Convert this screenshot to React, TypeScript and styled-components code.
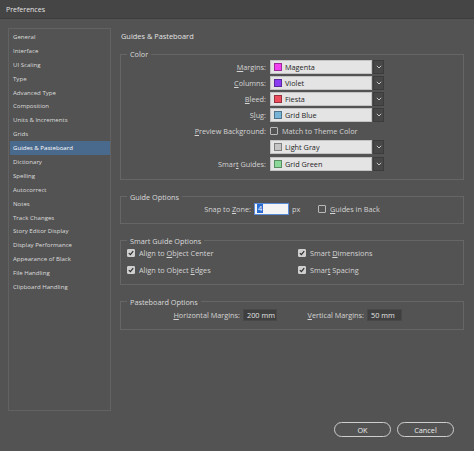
import styled, { createGlobalStyle } from "styled-components";

const GlobalStyle = createGlobalStyle`
  html, body {
    margin: 0;
    padding: 0;
    background: #535353;
  }
  body {
    font-family: "Open Sans", "Noto Sans", sans-serif;
  }
  * {
    box-sizing: border-box;
  }
`;

const sections = [
  "General",
  "Interface",
  "UI Scaling",
  "Type",
  "Advanced Type",
  "Composition",
  "Units & Increments",
  "Grids",
  "Guides & Pasteboard",
  "Dictionary",
  "Spelling",
  "Autocorrect",
  "Notes",
  "Track Changes",
  "Story Editor Display",
  "Display Performance",
  "Appearance of Black",
  "File Handling",
  "Clipboard Handling",
];

const Chevron = () => (
  <svg width="6" height="4" viewBox="0 0 6 4">
    <path d="M0.8 0.8 L3 3 L5.2 0.8" fill="none" stroke="#c4c4c4" strokeWidth="1" />
  </svg>
);

const Check = () => (
  <svg width="6" height="6" viewBox="0 0 6 6">
    <path d="M0.8 3.1 L2.4 4.6 L5.2 1.2" fill="none" stroke="#2e2e2e" strokeWidth="1.2" />
  </svg>
);

const Box = ({ checked }: { checked?: boolean }) => (
  <CheckBox $checked={!!checked}>{checked && <Check />}</CheckBox>
);

const Dropdown = ({ color, name }: { color: string; name: string }) => (
  <>
    <Select>
      <Swatch $color={color} />
      {name}
    </Select>
    <ChevronButton>
      <Chevron />
    </ChevronButton>
  </>
);

const App = () => {
  return (
    <Window>
      <GlobalStyle />
      <TitleBar>Preferences</TitleBar>
      <Body>
        <Sidebar>
          {sections.map((s) => (
            <SideItem key={s} $active={s === "Guides & Pasteboard"}>
              {s}
            </SideItem>
          ))}
        </Sidebar>
        <Main>
          <Header>Guides &amp; Pasteboard</Header>

          <Group $first>
            <Legend>Color</Legend>
            <ColorRows>
              <ColorRow>
                <RowLabel>
                  <Key>M</Key>argins:
                </RowLabel>
                <Dropdown color="#f040f0" name="Magenta" />
              </ColorRow>
              <ColorRow>
                <RowLabel>
                  <Key>C</Key>olumns:
                </RowLabel>
                <Dropdown color="#8a3cf0" name="Violet" />
              </ColorRow>
              <ColorRow>
                <RowLabel>
                  <Key>B</Key>leed:
                </RowLabel>
                <Dropdown color="#ec4c5c" name="Fiesta" />
              </ColorRow>
              <ColorRow>
                <RowLabel>
                  S<Key>l</Key>ug:
                </RowLabel>
                <Dropdown color="#78b4d6" name="Grid Blue" />
              </ColorRow>
              <ColorRow>
                <RowLabel>
                  <Key>P</Key>review Background:
                </RowLabel>
                <InlineCheck>
                  <Box />
                  Match to Theme Color
                </InlineCheck>
              </ColorRow>
              <ColorRow>
                <RowLabel />
                <Dropdown color="#c4c4c4" name="Light Gray" />
              </ColorRow>
              <ColorRow>
                <RowLabel>
                  Smar<Key>t</Key> Guides:
                </RowLabel>
                <Dropdown color="#8cd898" name="Grid Green" />
              </ColorRow>
            </ColorRows>
          </Group>

          <Group>
            <Legend>Guide Options</Legend>
            <FieldRow>
              <FieldLabel $width={124}>
                Snap to <Key>Z</Key>one:
              </FieldLabel>
              <ZoneInput>
                <Selected>4</Selected>
              </ZoneInput>
              <Unit>px</Unit>
              <InlineCheck>
                <Box />
                <span>
                  <Key>G</Key>uides in Back
                </span>
              </InlineCheck>
            </FieldRow>
          </Group>

          <Group>
            <Legend>Smart Guide Options</Legend>
            <CheckGrid>
              <InlineCheck>
                <Box checked />
                <span>
                  Align to <Key>O</Key>bject Center
                </span>
              </InlineCheck>
              <InlineCheck>
                <Box checked />
                <span>
                  Smart <Key>D</Key>imensions
                </span>
              </InlineCheck>
              <InlineCheck>
                <Box checked />
                <span>
                  Align to Object <Key>E</Key>dges
                </span>
              </InlineCheck>
              <InlineCheck>
                <Box checked />
                <span>
                  Smar<Key>t</Key> Spacing
                </span>
              </InlineCheck>
            </CheckGrid>
          </Group>

          <Group $pad={2}>
            <Legend>Pasteboard Options</Legend>
            <FieldRow>
              <FieldLabel $width={113}>
                <Key>H</Key>orizontal Margins:
              </FieldLabel>
              <DarkInput $width={34}>200 mm</DarkInput>
              <FieldLabel $width={87}>
                <Key>V</Key>ertical Margins:
              </FieldLabel>
              <DarkInput $width={35}>50 mm</DarkInput>
            </FieldRow>
          </Group>
        </Main>
      </Body>
      <Footer>
        <PillButton>OK</PillButton>
        <PillButton>Cancel</PillButton>
      </Footer>
    </Window>
  );
};

export default App;

const Window = styled.div`
  width: 474px;
  height: 451px;
  display: flex;
  flex-direction: column;
  background: #535353;
  overflow: hidden;
`;

const TitleBar = styled.div`
  height: 19px;
  display: flex;
  align-items: center;
  padding-left: 6px;
  background: #454545;
  border-bottom: 1px solid #3d3d3d;
  color: #e4e4e4;
  font-size: 7px;
`;

const Body = styled.div`
  display: flex;
  gap: 9px;
  padding: 9px 0 0 8px;
`;

const Sidebar = styled.div`
  width: 103px;
  height: 383px;
  border: 1px solid #626262;
  padding-top: 1px;
  display: flex;
  flex-direction: column;
`;

const SideItem = styled.div<{ $active?: boolean }>`
  height: 13.9px;
  line-height: 13.9px;
  margin-left: 1px;
  padding-left: 3px;
  font-size: 6.1px;
  white-space: nowrap;
  color: ${(p) => (p.$active ? "#ffffff" : "#dcdcdc")};
  background: ${(p) => (p.$active ? "#4a6a8d" : "transparent")};
`;

const Main = styled.div`
  width: 344px;
  display: flex;
  flex-direction: column;
  color: #d4d4d4;
  font-size: 7.3px;
`;

const Header = styled.div`
  height: 16px;
  line-height: 16px;
  padding-left: 1px;
  color: #e2e2e2;
  font-size: 7.4px;
`;

const Group = styled.fieldset<{ $first?: boolean; $pad?: number }>`
  margin: ${(p) => (p.$first ? "5px" : "12px")} 0 0 0;
  padding: ${(p) => p.$pad ?? 1}px 6px 8px 6px;
  border: 1px solid #666666;
  min-width: 0;
`;

const Legend = styled.legend`
  padding: 0 3px;
  line-height: 10px;
  font-size: 7.3px;
  color: #dadada;
`;

const ColorRows = styled.div`
  display: flex;
  flex-direction: column;
  gap: 2.2px;
  margin-top: -0.5px;
  padding-bottom: 0;
`;

const ColorRow = styled.div`
  display: flex;
  align-items: center;
  height: 14px;
`;

const RowLabel = styled.span`
  width: 139px;
  text-align: right;
  white-space: nowrap;
`;

const Key = styled.span`
  text-decoration: underline;
  text-underline-offset: 1px;
`;

const Select = styled.div`
  margin-left: 4px;
  width: 102px;
  height: 14px;
  display: flex;
  align-items: center;
  gap: 3px;
  padding-left: 3px;
  background: #e4e4e4;
  border: 1px solid #c2c2c2;
  color: #1e1e1e;
`;

const Swatch = styled.span<{ $color: string }>`
  width: 8px;
  height: 8px;
  background: ${(p) => p.$color};
  border: 1px solid rgba(0, 0, 0, 0.35);
  flex-shrink: 0;
`;

const ChevronButton = styled.div`
  margin-left: 1px;
  width: 11px;
  height: 14px;
  display: flex;
  align-items: center;
  justify-content: center;
  background: #474747;
  border: 1px solid #3c3c3c;
`;

const InlineCheck = styled.span`
  display: inline-flex;
  align-items: center;
  gap: 4px;
  margin-left: 4px;
  white-space: nowrap;
  color: #d4d4d4;
`;

const CheckBox = styled.span<{ $checked: boolean }>`
  width: 8px;
  height: 8px;
  display: inline-flex;
  align-items: center;
  justify-content: center;
  flex-shrink: 0;
  border-radius: 1px;
  border: 1px solid ${(p) => (p.$checked ? "#cfcfcf" : "#b9b9b9")};
  background: ${(p) => (p.$checked ? "#cfcfcf" : "transparent")};
`;

const FieldRow = styled.div`
  display: flex;
  align-items: center;
  height: 12px;
`;

const FieldLabel = styled.span<{ $width: number }>`
  width: ${(p) => p.$width}px;
  text-align: right;
  white-space: nowrap;
`;

const ZoneInput = styled.div`
  margin-left: 3px;
  width: 35px;
  height: 12px;
  display: flex;
  align-items: center;
  padding-left: 2px;
  background: #f4f4f4;
  border: 1px solid #5a8bd8;
`;

const Selected = styled.span`
  background: #2a6bd2;
  color: #ffffff;
  line-height: 9px;
  padding: 0 1px;
`;

const Unit = styled.span`
  width: 22px;
  margin-left: 3px;
`;

const CheckGrid = styled.div`
  display: grid;
  grid-template-columns: 171px auto;
  grid-auto-rows: 12px;
  row-gap: 5px;
  align-items: center;

  & > ${InlineCheck} {
    margin-left: 0;
  }
`;

const DarkInput = styled.div<{ $width: number }>`
  margin-left: 3px;
  width: ${(p) => p.$width}px;
  height: 12px;
  display: flex;
  align-items: center;
  padding-left: 3px;
  background: #3f3f3f;
  border: 1px solid #484848;
  color: #e4e4e4;
  white-space: nowrap;
`;

const Footer = styled.div`
  display: flex;
  justify-content: flex-end;
  gap: 6px;
  margin-top: 11px;
  padding-right: 20px;
`;

const PillButton = styled.button`
  width: 57px;
  height: 15px;
  padding: 0;
  border-radius: 8px;
  border: 1.5px solid #cdcdcd;
  background: transparent;
  color: #ececec;
  font-family: "Open Sans", "Noto Sans", sans-serif;
  font-size: 7.3px;
`;
